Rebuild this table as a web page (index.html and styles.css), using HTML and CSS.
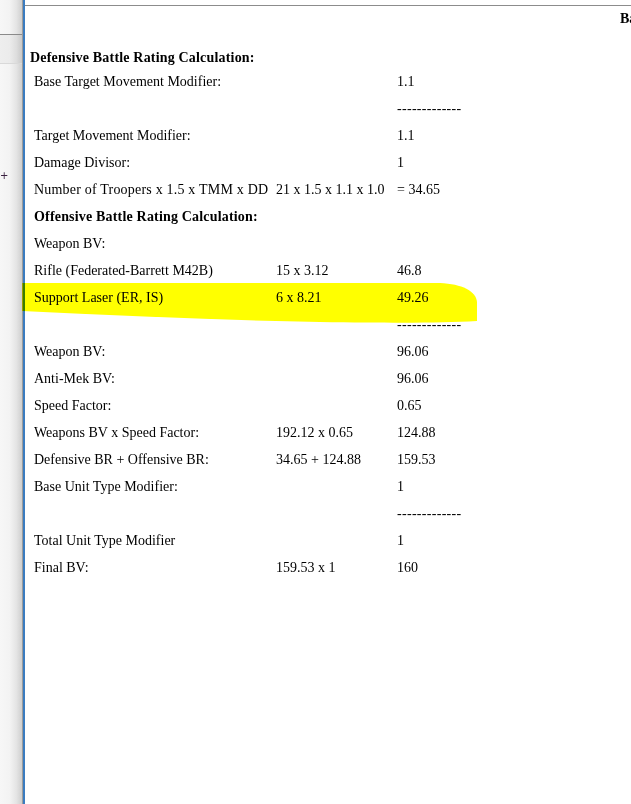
FILE: index.html
```html
<!DOCTYPE html>
<html>
<head>
<meta charset="utf-8">
<link rel="stylesheet" href="styles.css">
</head>
<body>
<div class="app">
  <aside class="sidebar">
    <div class="sidebar-band"></div>
    <div class="sidebar-plus">+</div>
  </aside>
  <main class="main">
    <div class="title">Battle Value</div>
    <div class="calc">
      <div class="head head-def">Defensive Battle Rating Calculation:</div>
      <div>Base Target Movement Modifier:</div><div></div><div>1.1</div>
      <div></div><div></div><div class="dashes">-------------</div>
      <div>Target Movement Modifier:</div><div></div><div>1.1</div>
      <div>Damage Divisor:</div><div></div><div>1</div>
      <div class="wide">Number of Troopers x 1.5 x TMM x DD</div><div>21 x 1.5 x 1.1 x 1.0</div><div>= 34.65</div>
      <div class="head">Offensive Battle Rating Calculation:</div>
      <div>Weapon BV:</div><div></div><div></div>
      <div>Rifle (Federated-Barrett M42B)</div><div>15 x 3.12</div><div>46.8</div>
      <div>Support Laser (ER, IS)</div><div>6 x 8.21</div><div>49.26</div>
      <div></div><div></div><div class="dashes">-------------</div>
      <div>Weapon BV:</div><div></div><div>96.06</div>
      <div>Anti-Mek BV:</div><div></div><div>96.06</div>
      <div>Speed Factor:</div><div></div><div>0.65</div>
      <div>Weapons BV x Speed Factor:</div><div>192.12 x 0.65</div><div>124.88</div>
      <div>Defensive BR + Offensive BR:</div><div>34.65 + 124.88</div><div>159.53</div>
      <div>Base Unit Type Modifier:</div><div></div><div>1</div>
      <div></div><div></div><div class="dashes">-------------</div>
      <div>Total Unit Type Modifier</div><div></div><div>1</div>
      <div>Final BV:</div><div>159.53 x 1</div><div>160</div>
    </div>
  </main>
</div>
<svg class="highlight" width="631" height="804" viewBox="0 0 631 804">
  <path d="M22,283 L300,283 L440,283 C462,284 476,291 477,302 L477,321 C440,323 400,323 320,322 C220,320 120,316 22,311 Z" fill="#ffff00"/>
</svg>
</body>
</html>
```
FILE: styles.css
```css
html, body {
  margin: 0;
  padding: 0;
  width: 631px;
  height: 804px;
  overflow: hidden;
  background: #ffffff;
}

body {
  position: relative;
  font-family: "Liberation Serif", "Times New Roman", serif;
  font-size: 14px;
  color: #000;
}

.app {
  display: flex;
  height: 804px;
}

.sidebar {
  width: 22px;
  flex: none;
  background: linear-gradient(to right, #f7f7f7 0%, #f3f3f3 45%, #e4e4e4 75%, #cfcfcf 100%);
  border-right: 1px solid #9c9c9c;
  display: flex;
  flex-direction: column;
}

.sidebar-band {
  margin-top: 34px;
  height: 28px;
  border-top: 1px solid #8a8a8a;
  border-bottom: 1px solid #d9d9d9;
  background: linear-gradient(to right, #eeeeee 0%, #ebebeb 45%, #dddddd 75%, #c9c9c9 100%);
}

.sidebar-plus {
  margin-top: 107px;
  padding-left: 0;
  font-family: "DejaVu Sans", sans-serif;
  font-size: 10px;
  line-height: 10px;
  color: #3a2040;
}

.main {
  flex: 1;
  border-left: 2px solid #3b7cc0;
  min-width: 0;
  overflow: hidden;
}

.title {
  margin-top: 5px;
  border-top: 1px solid #8c8c8c;
  padding-top: 4px;
  padding-left: 595px;
  height: 18px;
  line-height: 18px;
  font-weight: bold;
  white-space: nowrap;
}

.calc {
  margin-top: 16px;
  padding-left: 9px;
  display: grid;
  grid-template-columns: 242px 121px auto;
  grid-template-rows: 24px;
  grid-auto-rows: 27px;
  line-height: 27px;
  white-space: nowrap;
}

.head {
  grid-column: 1 / -1;
  font-weight: bold;
  letter-spacing: 0.18px;
}

.head-def {
  margin-left: -4px;
}

.wide {
  letter-spacing: 0.2px;
}

.dashes {
  letter-spacing: 0.3px;
}

.highlight {
  position: absolute;
  left: 0;
  top: 0;
  mix-blend-mode: multiply;
  pointer-events: none;
}
```
